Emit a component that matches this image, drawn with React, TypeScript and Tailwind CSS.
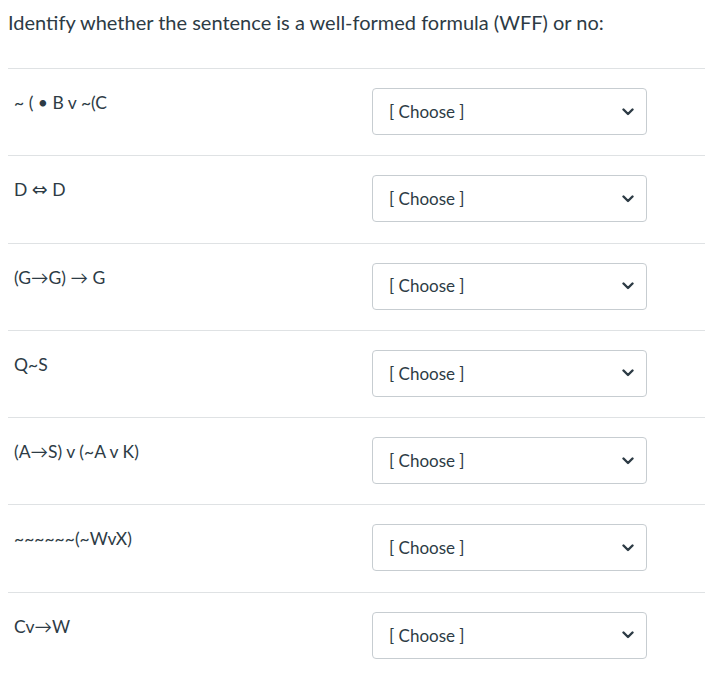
import React from 'react';

const rows: React.ReactNode[] = [
    '~ ( • B v ~(C',
    <>D <span style={{ fontFamily: '"DejaVu Sans", sans-serif' }} className="text-[19px] leading-none">⇔</span> D</>,
    '(G→G) → G',
    'Q~S',
    '(A→S) v (~A v K)',
    '~~~~~~(~WvX)',
    'Cv→W',
];

function Chevron() {
    return (
        <svg width="12" height="8" viewBox="0 0 12 8" className="text-[#2d3b45]">
            <path d="M1.5 1.5 L6 6 L10.5 1.5" fill="none" stroke="currentColor" strokeWidth="2.4" strokeLinecap="round" strokeLinejoin="round" />
        </svg>
    );
}

export default function App() {
    return (
        <div className="min-h-[681px] bg-white text-[#2d3b45]" style={{ fontFamily: 'Lato, "DejaVu Sans", sans-serif' }}>
            <div className="pl-[8px] pt-[8px]">
                <p className="text-[20px] leading-[28px] mb-[32px]">
                    Identify whether the sentence is a well-formed formula (WFF) or no:
                </p>
                {rows.map((text, i) => (
                    <div key={i} className="flex border-t border-[#dfe2e4] pt-[19px] pb-[20.3px]">
                        <div className="w-[364px] pl-[6px] pt-[3px] text-[17.5px] leading-[24px]">{text}</div>
                        <div className="flex h-[47px] w-[275px] items-center justify-between rounded-[4px] border border-[#c7cdd1] pl-[16px] pr-[12px] text-[17px]">
                            <span>[ Choose ]</span>
                            <Chevron />
                        </div>
                    </div>
                ))}
            </div>
        </div>
    );
}
